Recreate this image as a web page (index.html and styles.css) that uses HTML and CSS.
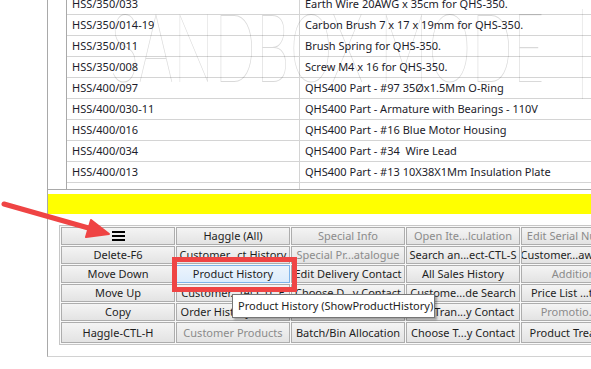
FILE: index.html
```html
<!DOCTYPE html>
<html>
<head>
<meta charset="utf-8">
<link rel="stylesheet" href="styles.css">
</head>
<body>
<div class="screen">
  <div class="panel">
    <div class="grid-view">
      <div class="rows">
        <div class="row"><div class="rh"></div><div class="c1">HSS/350/033</div><div class="c2">Earth Wire 20AWG x 35cm for QHS-350.</div></div>
        <div class="row"><div class="rh"></div><div class="c1">HSS/350/014-19</div><div class="c2">Carbon Brush 7 x 17 x 19mm for QHS-350.</div></div>
        <div class="row"><div class="rh"></div><div class="c1">HSS/350/011</div><div class="c2">Brush Spring for QHS-350.</div></div>
        <div class="row"><div class="rh"></div><div class="c1">HSS/350/008</div><div class="c2">Screw M4 x 16 for QHS-350.</div></div>
        <div class="row"><div class="rh"></div><div class="c1">HSS/400/097</div><div class="c2">QHS400 Part - #97 35Øx1.5Mm O-Ring</div></div>
        <div class="row"><div class="rh"></div><div class="c1">HSS/400/030-11</div><div class="c2">QHS400 Part - Armature with Bearings - 110V</div></div>
        <div class="row"><div class="rh"></div><div class="c1">HSS/400/016</div><div class="c2">QHS400 Part - #16 Blue Motor Housing</div></div>
        <div class="row"><div class="rh"></div><div class="c1">HSS/400/034</div><div class="c2">QHS400 Part - #34&nbsp; Wire Lead</div></div>
        <div class="row"><div class="rh"></div><div class="c1">HSS/400/013</div><div class="c2">QHS400 Part - #13 10X38X1Mm Insulation Plate</div></div>
        <div class="row"><div class="rh"></div><div class="c1"></div><div class="c2">QHS400 Part - #12 Carbon Brush Holder 7-17-19 110V</div></div>
      </div>
    </div>
    <div class="status-bar"></div>
    <div class="actions">
      <button class="btn"><svg class="menu-icon" width="13" height="10" viewBox="0 0 13 10"><rect x="0" y="0" width="13" height="2"/><rect x="0" y="4" width="13" height="2"/><rect x="0" y="8" width="13" height="2"/></svg></button>
      <button class="btn">Haggle (All)</button>
      <button class="btn off">Special Info</button>
      <button class="btn off">Open Ite...lculation</button>
      <button class="btn off">Edit Serial Numbers</button>

      <button class="btn">Delete-F6</button>
      <button class="btn">Customer...ct History</button>
      <button class="btn off">Special Pr...atalogue</button>
      <button class="btn">Search an...ect-CTL-S</button>
      <button class="btn">Customer...away Stock</button>

      <button class="btn">Move Down</button>
      <button class="btn hover">Product History</button>
      <button class="btn">Edit Delivery Contact</button>
      <button class="btn">All Sales History</button>
      <button class="btn off">Additional</button>

      <button class="btn">Move Up</button>
      <button class="btn">Customer...Tel-CTL-E</button>
      <button class="btn">Choose D...y Contact</button>
      <button class="btn">Custome...de Search</button>
      <button class="btn">Price List ...t&nbsp;<span class="mark">Items</span></button>

      <button class="btn">Copy</button>
      <button class="btn">Order History-CTL-O</button>
      <button class="btn">Edit Invoice Contact</button>
      <button class="btn">Edit Tran...y Contact</button>
      <button class="btn off">Promotio...List</button>

      <button class="btn">Haggle-CTL-H</button>
      <button class="btn off">Customer Products</button>
      <button class="btn">Batch/Bin Allocation</button>
      <button class="btn">Choose T...y Contact</button>
      <button class="btn">Product Treatment</button>
    </div>
  </div>
  <div class="watermark">SANDBOX MODE <span class="wm-bar">|</span></div>
  <div class="tooltip">Product History (ShowProductHistory)</div>
  <svg class="annot" width="591" height="369" viewBox="0 0 591 369">
    <line x1="4" y1="204" x2="92" y2="229" class="arrow-line"/>
    <polygon points="109,234 86,237 91,220" class="arrow-head"/>
    <rect x="174.5" y="259.5" width="120" height="30" class="hl"/>
  </svg>
</div>
</body>
</html>
```
FILE: styles.css
```css
html, body {
  margin: 0;
  padding: 0;
  overflow: hidden;
  background: #ffffff;
}
body {
  font-family: "Noto Sans", "Open Sans", sans-serif;
  font-size: 11px;
  color: #1e1e1e;
}
.screen {
  position: relative;
  width: 591px;
  height: 369px;
  overflow: hidden;
}
.panel {
  margin-left: 47px;
  width: 720px;
  border-left: 1px solid #a9a9a9;
  border-bottom: 1px solid #d2d2d2;
}
.grid-view {
  height: 189px;
  overflow: hidden;
  border-bottom: 1px solid #a9a9a9;
}
.rows {
  margin-top: -6px;
}
.row {
  display: flex;
  height: 21px;
}
.rh {
  width: 19px;
  box-sizing: border-box;
  border-right: 1px solid #a9a9a9;
  flex: none;
}
.c1, .c2 {
  box-sizing: border-box;
  border-bottom: 1px solid #d4d4d4;
  padding-left: 5px;
  line-height: 20px;
  white-space: nowrap;
  overflow: hidden;
  color: #1c1c2a;
}
.c1 {
  width: 233px;
  flex: none;
  border-right: 1px solid #d4d4d4;
}
.c2 {
  flex: 1;
}
.status-bar {
  margin-top: 4px;
  height: 20px;
  background: #ffff00;
}
.actions {
  margin: 11px 0 11px 11px;
  border: 1px solid #c6c6c6;
  padding: 1px;
  display: grid;
  grid-template-columns: repeat(5, 114px);
  grid-template-rows: repeat(5, 18px) 21px;
  gap: 1px;
  background: #f9f9f9;
}
.btn {
  font: inherit;
  color: #1e1e1e;
  margin: 0;
  padding: 0;
  border: 1px solid #adadad;
  background: linear-gradient(#f4f4f4, #e3e3e3);
  white-space: nowrap;
  overflow: hidden;
  text-align: center;
  line-height: 16px;
  display: flex;
  align-items: center;
  justify-content: center;
}
.btn.off {
  color: #8b8b8b;
}
.btn.hover {
  border-color: #7eb4ea;
  background: linear-gradient(#ecf4fc, #dcecfc);
}
.mark {
  background: #ffff00;
}
.menu-icon {
  fill: #000000;
  display: block;
}
.watermark {
  position: absolute;
  left: 110px;
  top: -15px;
  font-family: "Lato", sans-serif;
  font-weight: 100;
  font-size: 96px;
  line-height: 120px;
  color: rgba(0, 0, 0, 0.15);
  white-space: nowrap;
  pointer-events: none;
  transform: scaleX(0.57);
  transform-origin: 0 0;
}
.wm-bar {
  margin-left: 28px;
}
.tooltip {
  position: absolute;
  left: 232px;
  top: 294px;
  width: 203px;
  height: 24px;
  box-sizing: border-box;
  border: 1px solid #767676;
  background: #ffffff;
  padding-left: 5px;
  line-height: 22px;
  white-space: nowrap;
  box-shadow: 2px 2px 2px rgba(0, 0, 0, 0.3);
}
.annot {
  position: absolute;
  left: 0;
  top: 0;
  pointer-events: none;
}
.arrow-line {
  stroke: #ef4444;
  stroke-width: 5;
  stroke-linecap: round;
}
.arrow-head {
  fill: #ef4444;
  stroke: #ef4444;
  stroke-width: 2;
  stroke-linejoin: round;
}
.hl {
  fill: none;
  stroke: #ef4444;
  stroke-width: 5;
}
```
